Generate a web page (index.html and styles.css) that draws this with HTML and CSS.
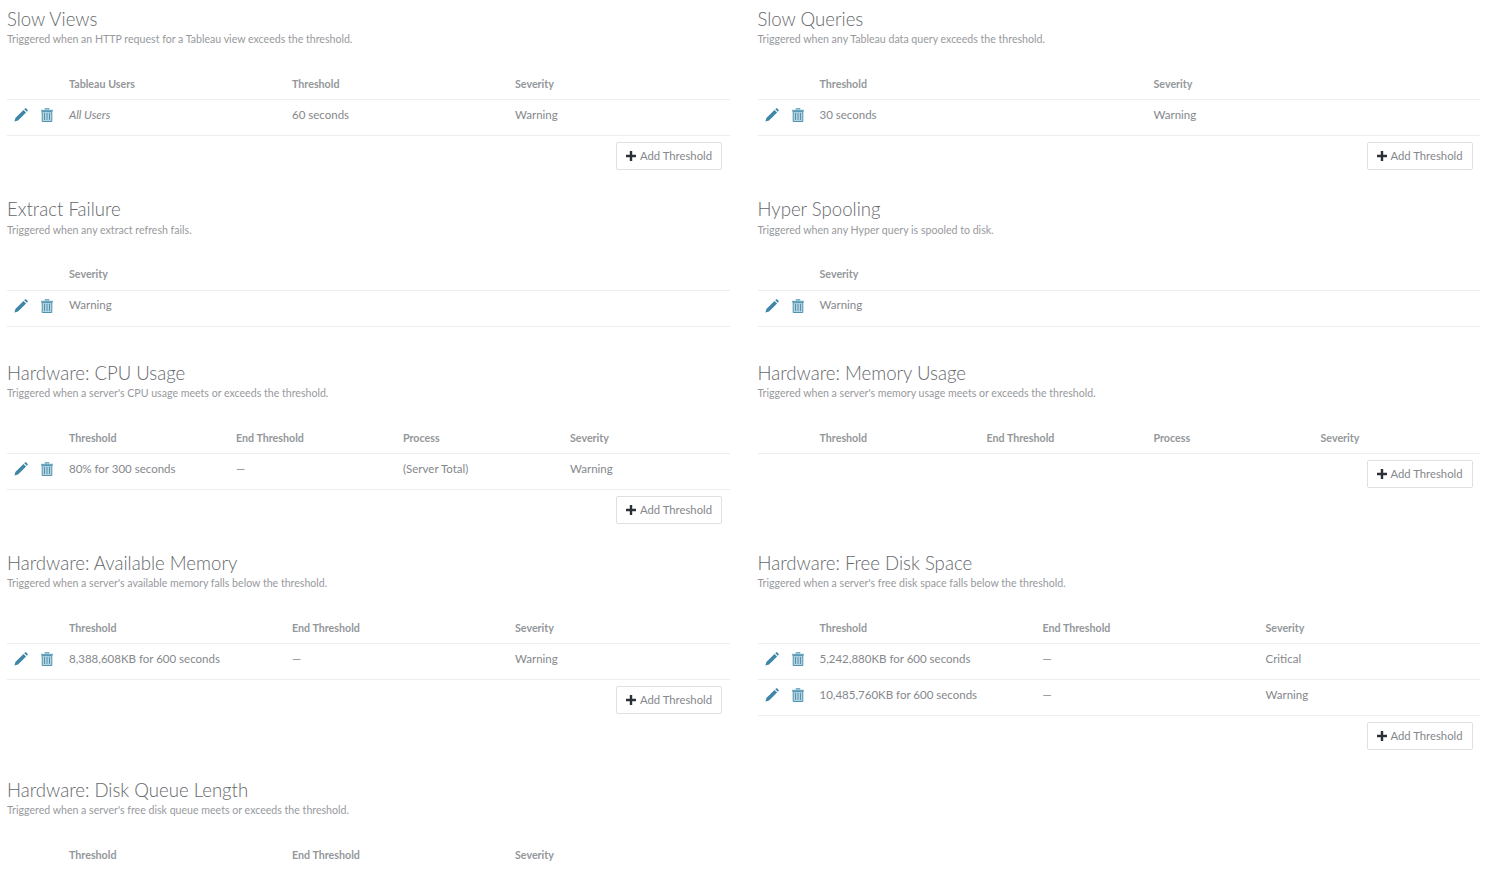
FILE: index.html
```html
<!DOCTYPE html>
<html lang="en">
<head>
<meta charset="utf-8">
<title>Alerts</title>
<link rel="stylesheet" href="styles.css">
</head>
<body>
<svg width="0" height="0" class="defs">
  <symbol id="pen" viewBox="0 0 16 16"><path d="M0.5 15.5 L1.6 11.4 L10.8 2.2 L13.8 5.2 L4.6 14.4 Z" fill="#3f86a6"/><path d="M11.7 1.3 L12.8 0.3 Q13.3 0 13.8 .4 L15.6 2.2 Q16 2.7 15.7 3.2 L14.7 4.3 Z" fill="#3f86a6"/></symbol>
  <symbol id="trash" viewBox="0 0 12 14"><path d="M4 1.5 V.5 H8 V1.5 M.2 2.2 H11.8 V3.2 H.2 Z" fill="#5d9db9" stroke="#5d9db9" stroke-width=".6"/><path d="M1.2 3.6 H10.8 V13.5 H1.2 Z" fill="#b5d4e0" stroke="#4f93b1"/><path d="M3.5 5 V12 M6 5 V12 M8.5 5 V12" stroke="#4f93b1" stroke-width="1"/></symbol>
  <symbol id="plus" viewBox="0 0 10 10"><path d="M3.8 0 H6.2 V3.8 H10 V6.2 H6.2 V10 H3.8 V6.2 H0 V3.8 H3.8 Z" fill="#2b3038"/></symbol>
</svg>
<main class="page">
  <section class="alert">
    <h2>Slow Views</h2>
    <p>Triggered when an HTTP request for a Tableau view exceeds the threshold.</p>
    <div class="tbl c3">
      <div class="head"><span></span><span>Tableau Users</span><span>Threshold</span><span>Severity</span></div>
      <div class="row"><span class="acts"><svg class="pen"><use href="#pen"/></svg><svg class="trash"><use href="#trash"/></svg></span><span class="it">All Users</span><span>60 seconds</span><span>Warning</span></div>
    </div>
    <div class="foot"><button><svg class="plus"><use href="#plus"/></svg>Add Threshold</button></div>
  </section>
  <section class="alert">
    <h2>Slow Queries</h2>
    <p>Triggered when any Tableau data query exceeds the threshold.</p>
    <div class="tbl c2">
      <div class="head"><span></span><span>Threshold</span><span>Severity</span></div>
      <div class="row"><span class="acts"><svg class="pen"><use href="#pen"/></svg><svg class="trash"><use href="#trash"/></svg></span><span>30 seconds</span><span>Warning</span></div>
    </div>
    <div class="foot"><button><svg class="plus"><use href="#plus"/></svg>Add Threshold</button></div>
  </section>
  <section class="alert">
    <h2>Extract Failure</h2>
    <p>Triggered when any extract refresh fails.</p>
    <div class="tbl c1">
      <div class="head"><span></span><span>Severity</span></div>
      <div class="row"><span class="acts"><svg class="pen"><use href="#pen"/></svg><svg class="trash"><use href="#trash"/></svg></span><span>Warning</span></div>
    </div>
  </section>
  <section class="alert">
    <h2>Hyper Spooling</h2>
    <p>Triggered when any Hyper query is spooled to disk.</p>
    <div class="tbl c1">
      <div class="head"><span></span><span>Severity</span></div>
      <div class="row"><span class="acts"><svg class="pen"><use href="#pen"/></svg><svg class="trash"><use href="#trash"/></svg></span><span>Warning</span></div>
    </div>
  </section>
  <section class="alert">
    <h2>Hardware: CPU Usage</h2>
    <p>Triggered when a server's CPU usage meets or exceeds the threshold.</p>
    <div class="tbl c4">
      <div class="head"><span></span><span>Threshold</span><span>End Threshold</span><span>Process</span><span>Severity</span></div>
      <div class="row"><span class="acts"><svg class="pen"><use href="#pen"/></svg><svg class="trash"><use href="#trash"/></svg></span><span>80% for 300 seconds</span><span>—</span><span>(Server Total)</span><span>Warning</span></div>
    </div>
    <div class="foot"><button><svg class="plus"><use href="#plus"/></svg>Add Threshold</button></div>
  </section>
  <section class="alert">
    <h2>Hardware: Memory Usage</h2>
    <p>Triggered when a server's memory usage meets or exceeds the threshold.</p>
    <div class="tbl c4">
      <div class="head"><span></span><span>Threshold</span><span>End Threshold</span><span>Process</span><span>Severity</span></div>
    </div>
    <div class="foot"><button><svg class="plus"><use href="#plus"/></svg>Add Threshold</button></div>
  </section>
  <section class="alert">
    <h2>Hardware: Available Memory</h2>
    <p>Triggered when a server's available memory falls below the threshold.</p>
    <div class="tbl c3">
      <div class="head"><span></span><span>Threshold</span><span>End Threshold</span><span>Severity</span></div>
      <div class="row"><span class="acts"><svg class="pen"><use href="#pen"/></svg><svg class="trash"><use href="#trash"/></svg></span><span>8,388,608KB for 600 seconds</span><span>—</span><span>Warning</span></div>
    </div>
    <div class="foot"><button><svg class="plus"><use href="#plus"/></svg>Add Threshold</button></div>
  </section>
  <section class="alert">
    <h2>Hardware: Free Disk Space</h2>
    <p>Triggered when a server's free disk space falls below the threshold.</p>
    <div class="tbl c3">
      <div class="head"><span></span><span>Threshold</span><span>End Threshold</span><span>Severity</span></div>
      <div class="row"><span class="acts"><svg class="pen"><use href="#pen"/></svg><svg class="trash"><use href="#trash"/></svg></span><span>5,242,880KB for 600 seconds</span><span>—</span><span>Critical</span></div>
      <div class="row"><span class="acts"><svg class="pen"><use href="#pen"/></svg><svg class="trash"><use href="#trash"/></svg></span><span>10,485,760KB for 600 seconds</span><span>—</span><span>Warning</span></div>
    </div>
    <div class="foot"><button><svg class="plus"><use href="#plus"/></svg>Add Threshold</button></div>
  </section>
  <section class="alert">
    <h2>Hardware: Disk Queue Length</h2>
    <p>Triggered when a server's free disk queue meets or exceeds the threshold.</p>
    <div class="tbl c3">
      <div class="head"><span></span><span>Threshold</span><span>End Threshold</span><span>Severity</span></div>
    </div>
  </section>
</main>
</body>
</html>
```

FILE: styles.css
```css
html, body {
  margin: 0;
  height: 870px;
  overflow: hidden;
  background: #fff;
}
body {
  font-family: Lato, "Open Sans", sans-serif;
  color: #85888c;
}
.defs { position: absolute; }
.page {
  display: grid;
  grid-template-columns: 722.5px 722.5px;
  grid-template-rows: 190.5px 163.5px 190px 227px 100px;
  column-gap: 28px;
  padding-left: 7px;
}
.alert { min-width: 0; }
h2 {
  margin: 0;
  padding-top: 7.75px;
  height: 22.25px;
  font-size: 18.6px;
  line-height: 23px;
  font-weight: 300;
  color: #65686c;
}
p {
  margin: 0;
  padding-top: 2px;
  font-size: 10.6px;
  line-height: 14px;
  color: #979a9d;
}
.tbl { margin-top: 23px; }
.head, .row {
  display: grid;
  align-items: center;
  border-bottom: 1px solid #eeeeee;
  font-size: 11.5px;
}
.head {
  height: 28px;
  padding-bottom: 2px;
  font-size: 10.7px;
  font-weight: 700;
  color: #94979a;
}
.row {
  height: 28px;
  padding-bottom: 7px;
}
.c1 > div { grid-template-columns: 62px 669px; }
.c2 > div { grid-template-columns: 62px repeat(2, 334px); }
.c3 > div { grid-template-columns: 62px repeat(3, 223px); }
.c4 > div { grid-template-columns: 62px repeat(4, 167px); }
.it { font-style: italic; }
.acts {
  display: flex;
  align-items: center;
  gap: 13px;
  padding: 2px 0 0 7px;
}
.pen { width: 14px; height: 14px; }
.trash { width: 12px; height: 14px; }
.foot {
  display: flex;
  justify-content: flex-end;
  padding: 6px 7.5px 0 0;
}
button {
  display: flex;
  align-items: center;
  gap: 4px;
  height: 28px;
  width: 106px;
  padding: 0 0 2px 9px;
  box-sizing: border-box;
  background: #fff;
  border: 1px solid #dfe0e2;
  border-radius: 2px;
  font: 400 11.3px Lato, "Open Sans", sans-serif;
  color: #85888c;
  white-space: nowrap;
}
.plus { width: 10px; height: 10px; flex: none; margin-top: 2px; }
```
